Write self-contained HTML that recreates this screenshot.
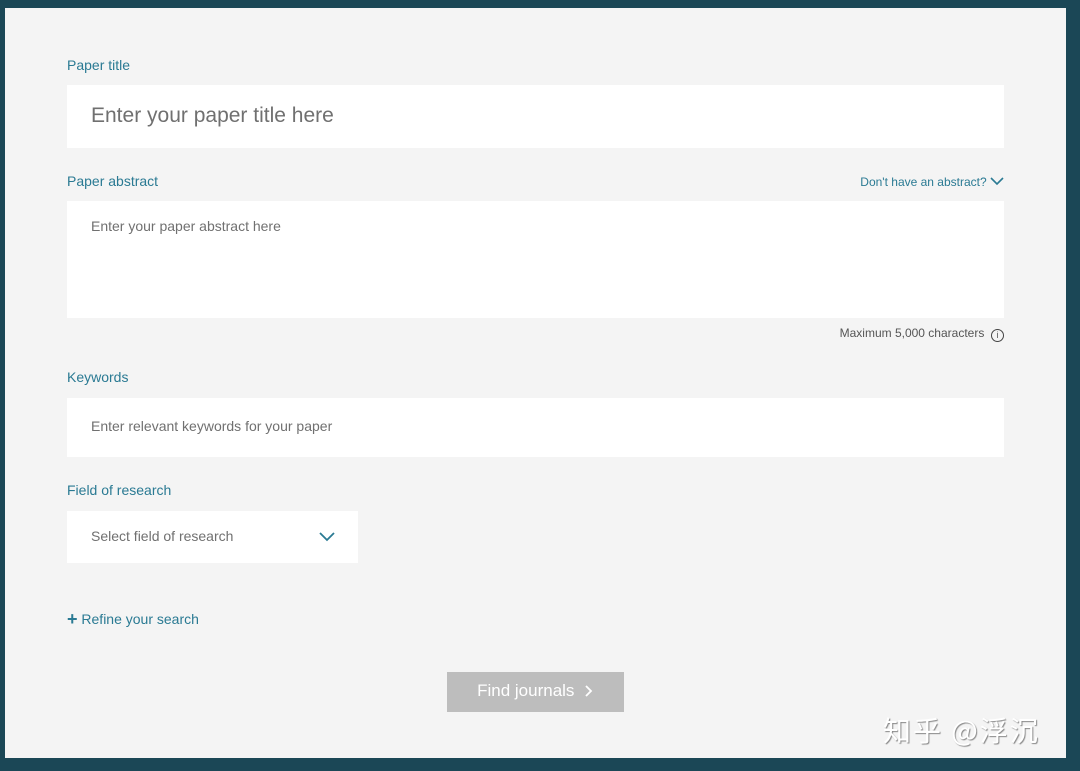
<!DOCTYPE html>
<html><head><style>
body{margin:0;width:1080px;height:771px;background:#1b4756;font-family:"Liberation Sans",sans-serif;position:relative;overflow:hidden}
#p{position:absolute;left:5px;top:8px;width:1061px;height:750px;background:#f4f4f4}
.l{position:absolute;left:62px;color:#2a7a93;font-size:14px}
.b{position:absolute;left:62px;background:#fff;color:#707070}
</style></head><body><div id="p">
<div class="l" style="top:49px">Paper title</div>
<div class="b" style="top:77px;width:937px;height:63px;font-size:21px;line-height:61px;padding-left:24px;box-sizing:border-box;width:937px">Enter your paper title here</div>
<div class="l" style="top:165px">Paper abstract</div>
<div style="position:absolute;right:62px;top:167px;color:#2a7a93;font-size:12px">Don't have an abstract? <svg width="14" height="10" viewBox="0 0 14 10"><path d="M1 2l6 6 6-6" stroke="#2a7a93" stroke-width="1.6" fill="none"/></svg></div>
<div class="b" style="top:193px;width:937px;height:117px;font-size:14px;padding:17px 24px;box-sizing:border-box">Enter your paper abstract here</div>
<div style="position:absolute;right:62px;top:318px;color:#555;font-size:12px">Maximum 5,000 characters &nbsp;<span style="display:inline-block;width:11px;height:11px;border:1.3px solid #444;border-radius:50%;font-size:9px;line-height:11px;text-align:center;vertical-align:-1px">i</span></div>
<div class="l" style="top:361px">Keywords</div>
<div class="b" style="top:390px;width:937px;height:59px;font-size:14px;line-height:56px;padding-left:24px;box-sizing:border-box">Enter relevant keywords for your paper</div>
<div class="l" style="top:474px">Field of research</div>
<div class="b" style="top:503px;width:291px;height:52px;font-size:14px;line-height:50px;padding-left:24px;box-sizing:border-box">Select field of research<svg style="position:absolute;left:251px;top:19px" width="18" height="12" viewBox="0 0 18 12"><path d="M2 3l7 7 7-7" stroke="#2a7a93" stroke-width="1.8" fill="none"/></svg></div>
<div class="l" style="top:601px;font-size:14px"><span style="font-size:18px;font-weight:bold;vertical-align:-1px">+</span> Refine your search</div>
<div style="position:absolute;left:442px;top:664px;width:177px;height:40px;background:#bdbdbd;color:#fff;font-size:17px;line-height:38px;text-align:center">Find journals &nbsp;<svg width="10" height="14" viewBox="0 0 10 14" style="vertical-align:-2px"><path d="M2 2l5 5-5 5" stroke="#fff" stroke-width="1.8" fill="none"/></svg></div>
<div style="position:absolute;left:878px;top:702px;color:#fff;font-size:28px;letter-spacing:2px;font-family:'Noto Sans CJK SC',sans-serif;text-shadow:1px 1px 1px #888">知乎 @浮沉</div>
</div></body></html>
